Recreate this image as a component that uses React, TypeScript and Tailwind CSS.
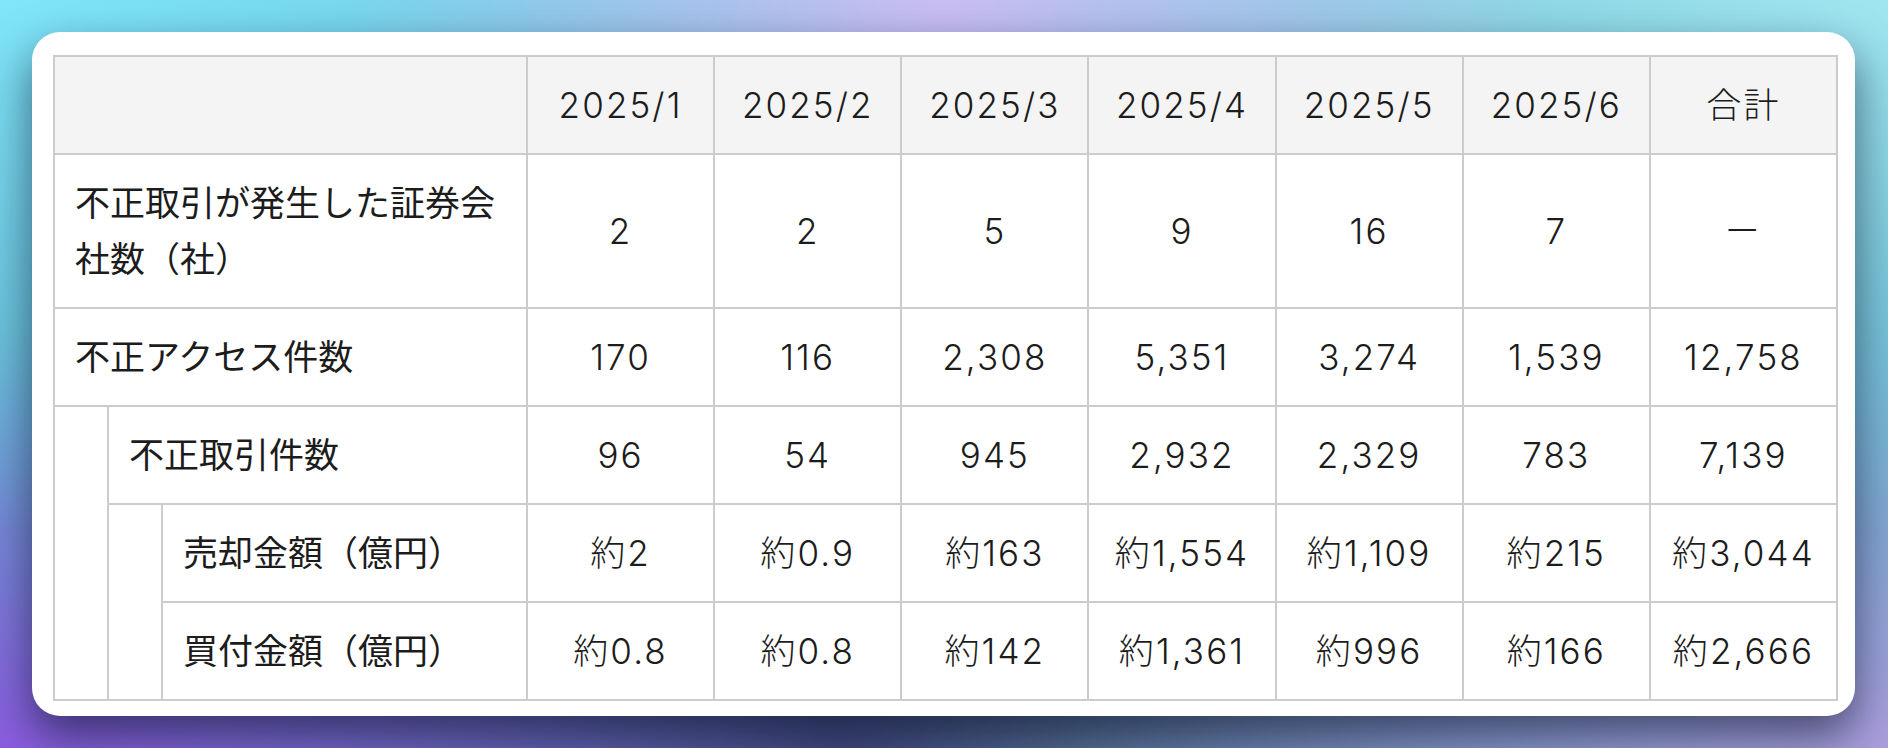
import React from "react";

const months = ["2025/1", "2025/2", "2025/3", "2025/4", "2025/5", "2025/6", "合計"];

const rows: { label: string; values: string[] }[] = [
  { label: "不正取引が発生した証券会社数（社）", values: ["2", "2", "5", "9", "16", "7", "ー"] },
  { label: "不正アクセス件数", values: ["170", "116", "2,308", "5,351", "3,274", "1,539", "12,758"] },
  { label: "不正取引件数", values: ["96", "54", "945", "2,932", "2,329", "783", "7,139"] },
  { label: "売却金額（億円）", values: ["約2", "約0.9", "約163", "約1,554", "約1,109", "約215", "約3,044"] },
  { label: "買付金額（億円）", values: ["約0.8", "約0.8", "約142", "約1,361", "約996", "約166", "約2,666"] },
];

const cell = "border-2 border-[#cccccc] px-5 py-5 align-middle";
const num = "text-center font-light tracking-[0.06em]";

function Values({ values }: { values: string[] }) {
  return (
    <>
      {values.map((v, i) => (
        <td key={i} className={`${cell} ${num}`}>
          {v}
        </td>
      ))}
    </>
  );
}

export default function App() {
  return (
    <div className="h-[748px] w-[1888px] overflow-hidden bg-[radial-gradient(ellipse_at_50%_0%,#cbbdf4_0%,transparent_45%),radial-gradient(ellipse_at_0%_0%,#80e6fa_0%,transparent_50%),radial-gradient(ellipse_at_100%_0%,#a0e6f0_0%,transparent_50%),radial-gradient(ellipse_at_0%_100%,#8c5ce0_0%,transparent_40%),radial-gradient(ellipse_at_100%_100%,#ac9ede_0%,transparent_40%),radial-gradient(ellipse_at_45%_100%,#2c4262_0%,transparent_60%),linear-gradient(#5fb0cc,#5fb0cc)] pl-[32px] pt-[32px]">
      <div className="w-[1823px] rounded-[28px] bg-white pl-[21px] pr-[17px] pt-[23px] pb-[15px] shadow-[0_20px_45px_rgba(8,16,40,0.6)]">
        <table
          className="w-full table-fixed border-collapse text-[35px] leading-[56px] text-[#1c1c1c]"
          style={{ fontFamily: '"Inter", "Noto Sans CJK JP", sans-serif' }}
        >
          <colgroup>
            <col className="w-[54px]" />
            <col className="w-[54px]" />
            <col className="w-[365px]" />
            <col />
            <col />
            <col />
            <col />
            <col />
            <col />
            <col />
          </colgroup>
          <thead>
            <tr className="bg-[#f4f4f4]">
              <th colSpan={3} className={cell}></th>
              {months.map((m) => (
                <th key={m} className={`${cell} ${num}`}>
                  {m}
                </th>
              ))}
            </tr>
          </thead>
          <tbody>
            <tr>
              <td colSpan={3} className={`${cell} text-left`}>
                {rows[0].label}
              </td>
              <Values values={rows[0].values} />
            </tr>
            <tr>
              <td colSpan={3} className={`${cell} text-left`}>
                {rows[1].label}
              </td>
              <Values values={rows[1].values} />
            </tr>
            <tr>
              <td rowSpan={3} className={`${cell} p-0`}></td>
              <td colSpan={2} className={`${cell} text-left`}>
                {rows[2].label}
              </td>
              <Values values={rows[2].values} />
            </tr>
            <tr>
              <td rowSpan={2} className={`${cell} p-0`}></td>
              <td className={`${cell} text-left`}>{rows[3].label}</td>
              <Values values={rows[3].values} />
            </tr>
            <tr>
              <td className={`${cell} text-left`}>{rows[4].label}</td>
              <Values values={rows[4].values} />
            </tr>
          </tbody>
        </table>
      </div>
    </div>
  );
}
